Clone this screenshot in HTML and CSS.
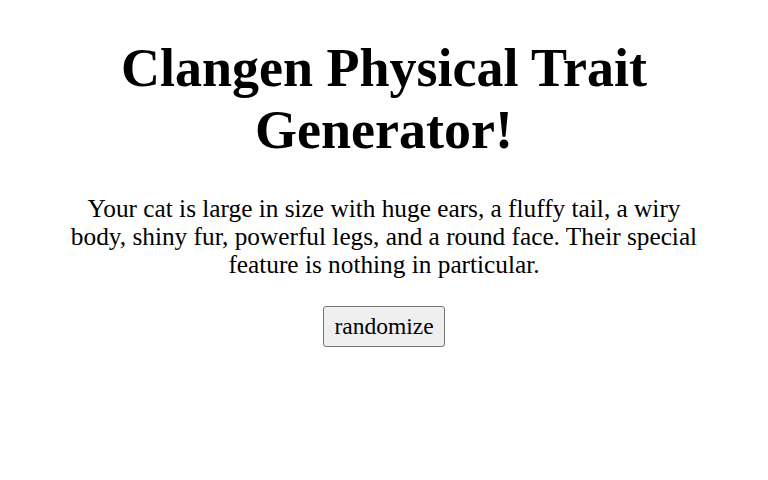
FILE: index.html
```html
<!DOCTYPE html>
<html>
<head>
<meta charset="utf-8">
<link rel="stylesheet" href="styles.css">
</head>
<body>
<div class="page">
<h1 class="title">Clangen Physical Trait Generator!</h1>
<p class="desc">Your cat is large in size with huge ears, a fluffy tail, a wiry body, shiny fur, powerful legs, and a round face. Their special feature is nothing in particular.</p>
<button class="btn">randomize</button>
</div>
</body>
</html>
```
FILE: styles.css
```css
body {
  margin: 8px;
  font-family: "Liberation Serif", serif;
  color: #000;
  background: #fff;
}
.page {
  text-align: center;
  padding: 0 58px;
}
.title {
  font-size: 54px;
  font-weight: bold;
  margin: 29px 0 33px;
}
.desc {
  font-size: 25.3px;
  line-height: 28px;
  margin: 0 0 28px;
}
.btn {
  font-family: "Liberation Serif", serif;
  font-size: 23.5px;
  padding: 6px 10px;
  background: #efefef;
  border: 1px solid #767676;
  border-radius: 3px;
  color: #000;
}
```
